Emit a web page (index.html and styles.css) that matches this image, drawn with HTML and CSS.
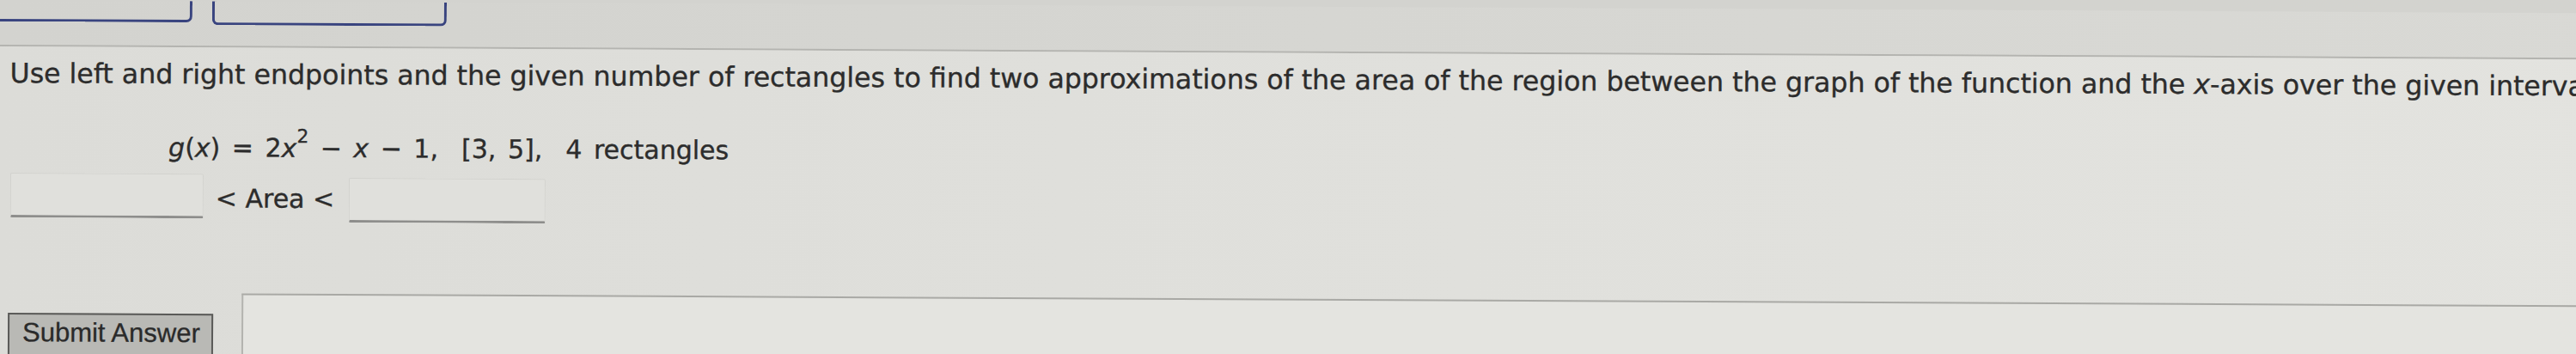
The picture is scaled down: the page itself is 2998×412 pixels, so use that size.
FILE: index.html
```html
<!DOCTYPE html>
<html lang="en">
<head>
<meta charset="utf-8">
<title>Left and right endpoint approximations</title>
<link rel="stylesheet" href="styles.css">
</head>
<body>
<div class="page">
  <div class="top-area">
    <div class="tab tab-first"></div>
    <div class="tab tab-second"></div>
  </div>
  <div class="content">
    <p class="question">Use left and right endpoints and the given number of rectangles to find two approximations of the area of the region between the graph of the function and the <i>x</i>-axis over the given interval.</p>
    <p class="equation"><i>g</i>(<i>x</i>) = 2<i>x</i><sup>2</sup> − <i>x</i> − 1,&nbsp; [3, 5],&nbsp; 4 rectangles</p>
    <div class="area-row">
      <span class="answer answer-low"></span>
      <span class="area-label">&lt; Area &lt;</span>
      <span class="answer answer-high"></span>
    </div>
    <div class="bottom-row">
      <button class="submit" type="button">Submit Answer</button>
      <div class="feedback"></div>
    </div>
  </div>
</div>
</body>
</html>
```

FILE: styles.css
```css
html {
  background: #d3d3cf;
}

body {
  margin: 0;
  overflow: hidden;
  height: 412px;
}

.page {
  width: 3100px;
  transform: rotate(0.29deg);
  transform-origin: 0 0;
  font-family: "DejaVu Sans", Verdana, sans-serif;
  color: #2c2c2c;
}

.top-area {
  height: 52px;
  display: flex;
  align-items: flex-start;
  gap: 23px;
  background: linear-gradient(90deg, #d3d3cf 0%, #d6d6d2 50%, #d9d9d5 100%);
  border-bottom: 2px solid #b4b4b0;
}

.tab {
  border: 3px solid #39447f;
  border-top: 0;
  border-radius: 0 0 7px 7px;
  box-sizing: border-box;
}

.tab-first {
  margin-left: -10px;
  width: 234px;
  height: 25px;
}

.tab-second {
  width: 273px;
  height: 28px;
}

.content {
  background: linear-gradient(90deg, #dcdcd8 0%, #dfdfdb 40%, #e3e3df 100%);
  padding-left: 12px;
  height: 420px;
  overflow: hidden;
  -webkit-text-stroke: 0.35px #2c2c2c;
}

.question {
  margin: 13px 0 0;
  font-size: 31.6px;
  line-height: 36px;
  white-space: nowrap;
}

.equation {
  margin: 50px 0 0 185px;
  font-size: 30px;
  line-height: 36px;
  word-spacing: 4px;
  white-space: nowrap;
}

.equation sup {
  font-size: 0.72em;
  line-height: 0;
  vertical-align: 0.78em;
}

.area-row {
  margin-top: 12px;
  display: flex;
  align-items: flex-start;
}

.answer {
  display: block;
  box-sizing: border-box;
  height: 52px;
  background: #e0e0dc;
  border: 1px solid #d2d2ce;
  border-bottom: 3px solid #8e8e8c;
  border-radius: 2px;
}

.answer-low {
  margin-left: 1px;
  width: 225px;
}

.answer-high {
  margin-top: 4px;
  margin-left: 17px;
  width: 229px;
}

.area-label {
  margin: 11px 0 0 14px;
  font-size: 30px;
  line-height: 36px;
  white-space: nowrap;
}

.bottom-row {
  margin-top: 83px;
  display: flex;
  align-items: flex-start;
}

.submit {
  margin: 24px 0 0 -1px;
  width: 239px;
  box-sizing: border-box;
  padding: 3px 0 20px 15px;
  text-align: left;
  font-family: "Liberation Sans", Arial, sans-serif;
  font-size: 31px;
  line-height: 36px;
  color: #2a2a2a;
  -webkit-text-stroke: 0.3px #2a2a2a;
  background: #b9b9b5;
  border: 2px solid #5a5a58;
  border-radius: 0;
}

.feedback {
  margin-left: 33px;
  flex: 1;
  height: 120px;
  background: #e4e4e0;
  border-top: 2px solid #a9a9a5;
  border-left: 2px solid #b3b3af;
}
```
